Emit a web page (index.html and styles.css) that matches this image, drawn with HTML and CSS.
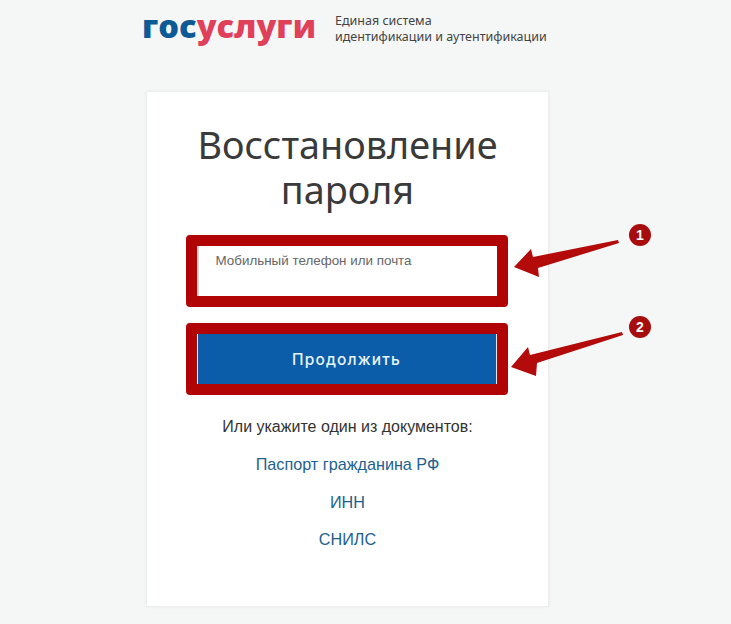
FILE: index.html
```html
<!DOCTYPE html>
<html lang="ru">
<head>
    <meta charset="UTF-8">
    <meta name="viewport" content="width=device-width, initial-scale=1.0">
    <title>Восстановление пароля</title>
    <link rel="stylesheet" href="styles.css">
</head>
<body>
    <div class="page">
        <header class="header">
            <div class="logo"><span class="logo-blue">гос</span><span class="logo-red">услуги</span></div>
            <div class="tagline">Единая система<br>идентификации и аутентификации</div>
        </header>

        <main class="card">
            <h1 class="title">Восстановление пароля</h1>

            <div class="frame frame-input">
                <div class="field">Мобильный телефон или почта</div>
            </div>

            <div class="frame frame-button">
                <button class="submit">Продолжить</button>
            </div>

            <p class="docs-label">Или укажите один из документов:</p>
            <a class="doc-link" href="#">Паспорт гражданина РФ</a>
            <a class="doc-link" href="#">ИНН</a>
            <a class="doc-link" href="#">СНИЛС</a>
        </main>

        <!-- стрелки поверх формы -->
        <svg class="arrows" width="731" height="624" viewBox="0 0 731 624" aria-hidden="true">
            <polygon points="514,267 531,249 533,257 618,240 619,243 538,268 539,277" fill="#b30a0a"/>
            <polygon points="511,367 528,347 530,355 622,332 623,335 537,363 536,376" fill="#b30a0a"/>
            <circle cx="640" cy="235" r="11" fill="#a80d0d"/>
            <circle cx="640" cy="327" r="11" fill="#a80d0d"/>
            <text class="badge-num" x="640" y="240">1</text>
            <text class="badge-num" x="640" y="332">2</text>
        </svg>
    </div>
</body>
</html>
```

FILE: styles.css
```css
* {
    box-sizing: border-box;
}

body {
    margin: 0;
    background: #f5f7f7;
    font-family: "Liberation Sans", Arial, sans-serif;
    color: #333;
}

.page {
    position: relative;
    width: 731px;
    height: 624px;
    overflow: hidden;
    padding-left: 146px;
}

.header {
    display: flex;
    align-items: flex-start;
    height: 91px;
    padding-top: 5px;
}

.logo {
    width: 193px;
    margin-left: -4px;
    font-family: "Open Sans", sans-serif;
    font-size: 32.6px;
    font-weight: 800;
    line-height: 42px;
}

.logo-blue { color: #0d5a96; }
.logo-red { color: #e0405a; }

.tagline {
    margin-top: 8px;
    font-family: "Noto Sans", sans-serif;
    font-size: 12.5px;
    line-height: 16px;
    color: #444;
    white-space: nowrap;
}

.card {
    width: 403px;
    height: 516px;
    padding-top: 30px;
    background: #fff;
    border: 1px solid #eceeee;
    box-shadow: 0 0 3px rgba(0, 0, 0, 0.06);
    display: flex;
    flex-direction: column;
    align-items: center;
}

.title {
    margin: 0 0 23px;
    width: 320px;
    font-family: "Noto Sans", sans-serif;
    font-size: 37.8px;
    font-weight: 400;
    line-height: 45px;
    text-align: center;
    color: #3a3a3a;
}

.frame {
    width: 322px;
    border: 11px solid #b10404;
    border-radius: 4px;
    margin-left: -2px;
}

.frame-input {
    height: 72px;
    margin-bottom: 16px;
}

.frame-button {
    height: 72px;
    margin-bottom: 22px;
}

.field {
    height: 100%;
    padding: 7px 0 0 17px;
    background: #fff;
    border-left: 2px solid #d6d0dc;
    font-size: 13.4px;
    line-height: 16px;
    color: #666;
}

.submit {
    display: block;
    width: 100%;
    height: 100%;
    padding: 0;
    background: #0b5ca9;
    border: none;
    border-left: 1px solid #fff;
    border-right: 1px solid #dfe8f2;
    font-family: Inter, sans-serif;
    font-size: 15.5px;
    font-weight: 500;
    letter-spacing: 1.15px;
    color: #e8f4fb;
}

.docs-label {
    margin: 0 0 19px;
    font-size: 16px;
    line-height: 19px;
    color: #333;
}

.doc-link {
    margin-bottom: 18.7px;
    font-size: 16.2px;
    line-height: 19px;
    color: #22618f;
    text-decoration: none;
}

.arrows {
    position: absolute;
    left: 0;
    top: 0;
}

.badge-num {
    font-family: "Liberation Sans", Arial, sans-serif;
    font-size: 14px;
    font-weight: 700;
    text-anchor: middle;
    fill: #fff;
}
```
